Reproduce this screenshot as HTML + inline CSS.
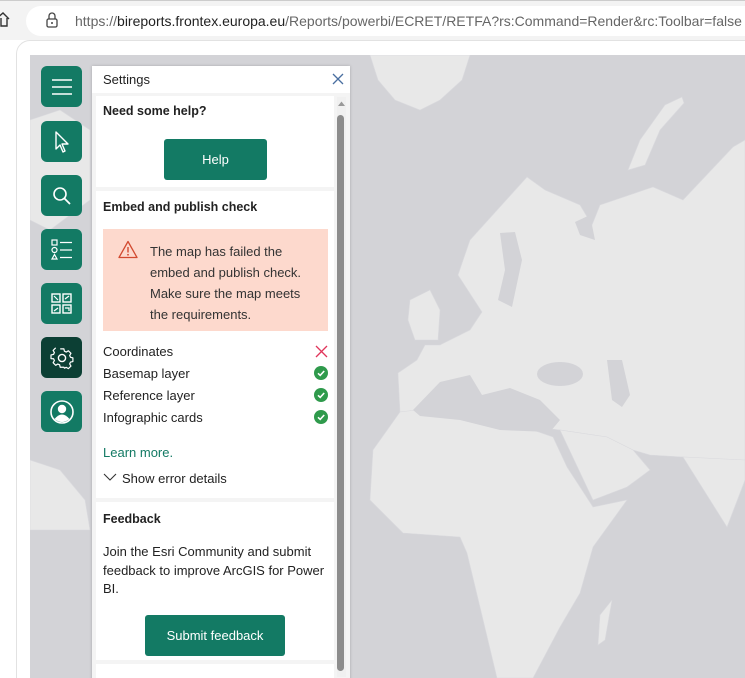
<!DOCTYPE html>
<html><head><style>
*{box-sizing:border-box;margin:0;padding:0}
html,body{width:745px;height:678px;overflow:hidden}
body{background:#fff;font-family:"Liberation Sans",sans-serif;position:relative}
.abs{position:absolute}
.btn{position:absolute;left:41px;width:41px;height:41px;border-radius:6px;background:#137a64;display:flex;align-items:center;justify-content:center}
.t{position:absolute;font-size:12.5px;color:#222;white-space:nowrap}
.sec{position:absolute;left:96px;width:238px;background:#fff}
.ok{position:absolute;left:314px;width:14px;height:14px;border-radius:50%;background:#2f9a4c}
</style></head><body>
<div class="abs" style="left:0;top:0;width:745px;height:40px;background:#f3f3f3;border-top:1px solid #ccc"></div>
<div class="abs" style="left:26px;top:6px;width:740px;height:30px;border-radius:15px;background:#fff"></div>
<svg class="abs" style="left:0;top:12px" width="10" height="16"><path d="M-4 7 L3 1 L9 7 M1 6 V14 H7 V6" fill="none" stroke="#333" stroke-width="1.4"/></svg>
<svg class="abs" style="left:44px;top:11px" width="16" height="18"><path d="M5 8 V5 a3 3 0 0 1 6 0 V8" fill="none" stroke="#444" stroke-width="1.3"/><rect x="3" y="8" width="10" height="8" rx="1.5" fill="none" stroke="#444" stroke-width="1.3"/><circle cx="8" cy="12" r="1" fill="#444"/></svg>
<div class="t" style="left:75px;top:13px;font-size:14px;color:#666">https://<span style="color:#222">bireports.frontex.europa.eu</span>/Reports/powerbi/ECRET/RETFA?rs:Command=Render&amp;rc:Toolbar=false</div>
<div class="abs" style="left:16px;top:40px;width:760px;height:660px;border:1px solid #e2e2e2;border-radius:14px 0 0 0;background:#fff"></div>
<svg class="abs" style="left:30px;top:55px" width="715" height="623" viewBox="30 55 715 623">
<rect x="30" y="55" width="715" height="623" fill="#d3d3d7"/>
<g fill="#e8e8e8" stroke="#dadade" stroke-width="0.6">
<path d="M370 55 L470 55 L462 80 L440 100 L420 110 L395 100 L378 80Z"/>
<path d="M440 345 L470 330 L482 312 L458 275 L470 240 L527 177 L545 190 L580 205 L592 225 L600 205 L653 187 L683 200 L733 147 L745 140 L745 480 L727 527 L705 470 L683 457 L650 455 L633 450 L607 437 L560 430 L520 425 L470 418 L430 412 L400 412 L398 373 L417 360 L425 345Z"/>
<path d="M410 300 L430 290 L440 310 L438 340 L415 340 L408 320Z"/>
<path d="M628 170 L640 140 L665 105 L682 97 L684 103 L660 130 L645 165Z"/>
<path d="M400 412 L373 450 L370 500 L403 533 L460 537 L467 553 L480 607 L497 678 L533 678 L560 627 L580 593 L593 547 L627 500 L593 507 L567 467 L553 437 L527 428 L473 420 L440 407Z"/>
<path d="M560 430 L593 500 L627 487 L650 470 L633 450 L607 437Z"/>
<path d="M683 457 L727 527 L745 480 L745 460Z"/>
<path d="M600 615 L612 600 L605 640 L598 645Z"/>
<path d="M30 460 L60 470 L85 500 L90 530 L30 530Z"/>
<path d="M30 120 L60 110 L90 130 L90 200 L50 230 L30 220Z"/>
</g>
<g fill="#d3d3d7">
<path d="M413 410 L440 382 L470 375 L482 395 L510 388 L540 400 L560 420 L550 432 L500 430 L460 420 L420 416Z"/>
<ellipse cx="560" cy="374" rx="23" ry="12"/>
<path d="M607 360 L622 360 L630 395 L622 407 L612 400Z"/>
<path d="M500 233 L515 232 L522 260 L512 307 L498 300 L505 270Z"/>
<path d="M575 222 L590 215 L595 240 L580 235Z"/>
</g>
</svg>
<div class="btn" style="top:66px"><svg width="22" height="18"><path d="M1 2H21M1 9H21M1 16H21" stroke="#fff" stroke-width="1.6"/></svg></div>
<div class="btn" style="top:121px"><svg width="20" height="24"><path d="M4 2 L4 19 L8 15 L11 22 L13 21 L10 14 L16 14Z" fill="none" stroke="#fff" stroke-width="1.4" stroke-linejoin="round"/></svg></div>
<div class="btn" style="top:175px"><svg width="20" height="20"><circle cx="8" cy="8" r="6" fill="none" stroke="#fff" stroke-width="1.6"/><path d="M12.5 12.5 L18 18" stroke="#fff" stroke-width="1.8"/></svg></div>
<div class="btn" style="top:229px"><svg width="22" height="22"><rect x="1" y="1" width="5" height="5" fill="none" stroke="#fff" stroke-width="1.2"/><circle cx="3.5" cy="11" r="2.5" fill="none" stroke="#fff" stroke-width="1.2"/><path d="M1 20 L3.5 15.5 L6 20Z" fill="none" stroke="#fff" stroke-width="1.2"/><path d="M9 3.5H21M9 11H21M9 18.5H21" stroke="#fff" stroke-width="1.3"/></svg></div>
<div class="btn" style="top:283px"><svg width="22" height="22"><rect x="1" y="1" width="8" height="8" fill="none" stroke="#fff" stroke-width="1.4"/><rect x="12" y="1" width="8" height="8" fill="none" stroke="#fff" stroke-width="1.4"/><rect x="1" y="12" width="8" height="8" fill="none" stroke="#fff" stroke-width="1.4"/><rect x="12" y="12" width="8" height="8" fill="none" stroke="#fff" stroke-width="1.4"/><path d="M3 3L7 7M14 6L18 3M3 18L7 15M14 15H18V18" stroke="#fff" stroke-width="1.2" fill="none"/></svg></div>
<div class="btn" style="top:337px;background:#0c3f34"><svg width="24" height="24" viewBox="0 0 24 24"><path d="M10 2h4l.6 2.6 2 .9 2.3-1.4 2.8 2.8-1.4 2.3.9 2 2.6.6v4l-2.6.6-.9 2 1.4 2.3-2.8 2.8-2.3-1.4-2 .9L14 22h-4l-.6-2.6-2-.9-2.3 1.4-2.8-2.8 1.4-2.3-.9-2L0 12.6v-4l2.8-.6.9-2L2.3 3.7 5.1.9" fill="none" stroke="#fff" stroke-width="1.3" stroke-linejoin="round" transform="translate(1 1) scale(.92)"/><circle cx="12" cy="12" r="3.6" fill="none" stroke="#fff" stroke-width="1.4"/></svg></div>
<div class="btn" style="top:391px"><svg width="24" height="24"><circle cx="12" cy="12" r="11" fill="none" stroke="#fff" stroke-width="1.6"/><circle cx="12" cy="9" r="4.2" fill="#fff"/><path d="M4.5 19 Q12 10 19.5 19 Q12 25 4.5 19Z" fill="#fff"/></svg></div>
<div class="abs" style="left:92px;top:66px;width:258px;height:620px;background:#f4f4f4;box-shadow:0 0 3px rgba(0,0,0,.2)"></div>
<div class="abs" style="left:92px;top:66px;width:258px;height:27px;background:#fff"></div>
<div class="t" style="left:103px;top:72px;font-size:13px">Settings</div>
<svg class="abs" style="left:332px;top:73px" width="12" height="12"><path d="M1 1L11 11M11 1L1 11" stroke="#4a6fa0" stroke-width="1.3"/></svg>
<div class="abs" style="left:337px;top:97px;width:9px;height:580px;background:#f0f0f0"></div>
<svg class="abs" style="left:337px;top:100px" width="9" height="8"><path d="M1 6L4.5 1.5L8 6Z" fill="#999"/></svg>
<div class="abs" style="left:337px;top:115px;width:7px;height:556px;border-radius:4px;background:#8c8c8c"></div>
<div class="sec" style="top:96px;height:91px"></div>
<div class="t" style="left:103px;top:104px;font-weight:bold">Need some help?</div>
<div class="abs" style="left:164px;top:139px;width:103px;height:41px;background:#137a64;border-radius:3px;color:#fff;font-size:13px;text-align:center;line-height:41px">Help</div>
<div class="sec" style="top:191px;height:307px"></div>
<div class="t" style="left:103px;top:200px;font-weight:bold">Embed and publish check</div>
<div class="abs" style="left:103px;top:229px;width:225px;height:102px;background:#fdd9cd"></div>
<svg class="abs" style="left:118px;top:240px" width="20" height="19"><path d="M10 1.5L19 17.5H1Z" fill="none" stroke="#d24a30" stroke-width="1.3" stroke-linejoin="round"/><path d="M10 7V12.5" stroke="#d24a30" stroke-width="1.4"/><circle cx="10" cy="14.8" r=".9" fill="#d24a30"/></svg>
<div class="t" style="left:150px;top:241px;line-height:21px;color:#333;font-size:13px">The map has failed the<br>embed and publish check.<br>Make sure the map meets<br>the requirements.</div>
<div class="t" style="left:103px;top:344px;font-size:13px">Coordinates</div>
<svg class="abs" style="left:315px;top:345px" width="13" height="13"><path d="M1 1L12 12M12 1L1 12" stroke="#e0355a" stroke-width="1.3"/></svg>
<div class="t" style="left:103px;top:366px;font-size:13px">Basemap layer</div>
<div class="t" style="left:103px;top:388px;font-size:13px">Reference layer</div>
<div class="t" style="left:103px;top:410px;font-size:13px">Infographic cards</div>
<div class="ok" style="top:366px"></div><div class="ok" style="top:388px"></div><div class="ok" style="top:410px"></div>
<svg class="abs" style="left:314px;top:366px" width="14" height="60"><g fill="none" stroke="#fff" stroke-width="1.6"><path d="M4 7.3L6.2 9.4L10.2 5"/><path d="M4 29.3L6.2 31.4L10.2 27"/><path d="M4 51.3L6.2 53.4L10.2 49"/></g></svg>
<div class="t" style="left:103px;top:445px;color:#137a64;font-size:13px">Learn more.</div>
<svg class="abs" style="left:103px;top:473px" width="14" height="9"><path d="M1 1L7 7L13 1" fill="none" stroke="#333" stroke-width="1.1"/></svg>
<div class="t" style="left:122px;top:471px;font-size:13px">Show error details</div>
<div class="sec" style="top:502px;height:158px"></div>
<div class="t" style="left:103px;top:512px;font-weight:bold">Feedback</div>
<div class="t" style="left:103px;top:543px;line-height:18.5px;font-size:13px">Join the Esri Community and submit<br>feedback to improve ArcGIS for Power<br>BI.</div>
<div class="abs" style="left:145px;top:615px;width:140px;height:41px;background:#137a64;border-radius:3px;color:#fff;font-size:13px;text-align:center;line-height:41px">Submit feedback</div>
<div class="sec" style="top:664px;height:20px"></div>
</body></html>
